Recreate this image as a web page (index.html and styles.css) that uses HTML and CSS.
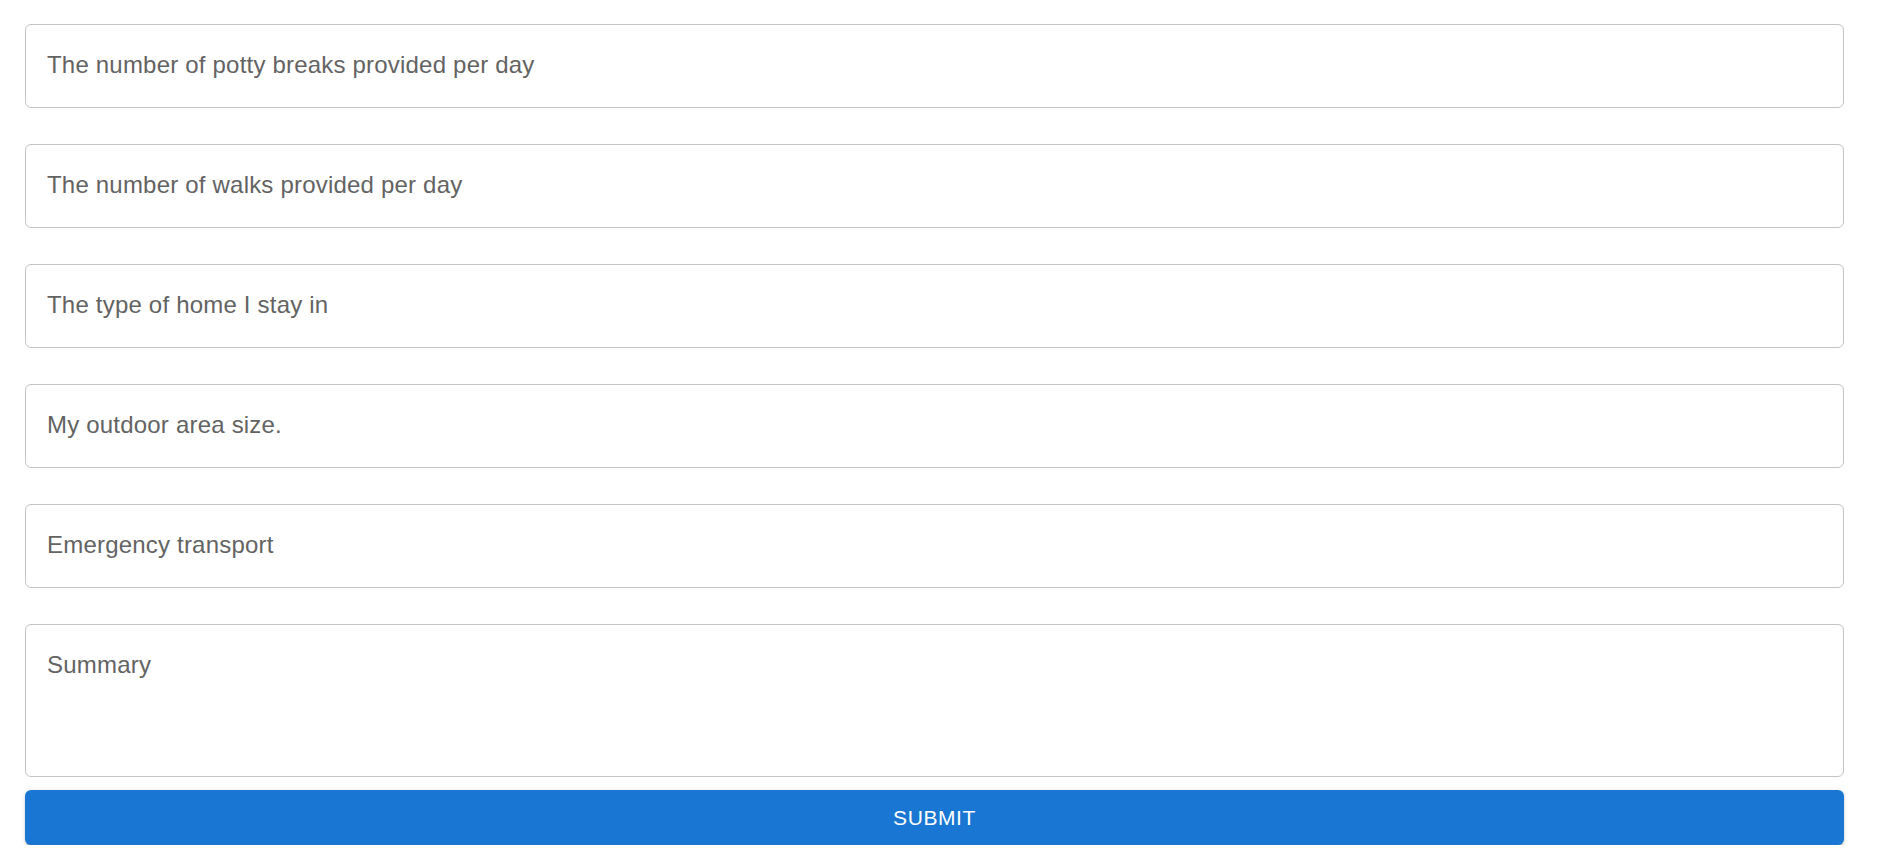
FILE: index.html
```html
<!DOCTYPE html>
<html lang="en">
<head>
    <meta charset="UTF-8">
    <meta name="viewport" content="width=device-width, initial-scale=1.0">
    <title>Care Details</title>
    <link rel="stylesheet" href="styles.css">
</head>
<body>
    <form class="care-form" onsubmit="return false;">
        <div class="field">
            <input type="text" placeholder="The number of potty breaks provided per day">
        </div>
        <div class="field">
            <input type="text" placeholder="The number of walks provided per day">
        </div>
        <div class="field">
            <input type="text" placeholder="The type of home I stay in">
        </div>
        <div class="field">
            <input type="text" placeholder="My outdoor area size.">
        </div>
        <div class="field">
            <input type="text" placeholder="Emergency transport">
        </div>
        <div class="field field-last">
            <textarea rows="3" placeholder="Summary"></textarea>
        </div>
        <button type="submit" class="submit-btn">Submit</button>
    </form>
</body>
</html>
```

FILE: styles.css
```css
body {
    font-family: 'Liberation Sans', Arial, sans-serif;
    margin: 0;
    padding: 0;
    background-color: #fff;
}
.care-form {
    display: flex;
    flex-direction: column;
    gap: 36px;
    padding: 24px 33px 0 25px;
}
.field {
    display: flex;
}
.field-last {
    margin-bottom: -23px;
}
.field input,
.field textarea {
    flex: 1;
    box-sizing: border-box;
    border: 1px solid #c4c4c4;
    border-radius: 6px;
    font-family: inherit;
    font-size: 24px;
    letter-spacing: 0.2px;
    color: #333;
    background: #fff;
    outline: none;
    margin: 0;
}
.field input {
    height: 84px;
    padding: 0 21px 2px;
}
.field textarea {
    height: 153px;
    padding: 23px 21px;
    line-height: 34.5px;
    resize: none;
}
.field input::placeholder,
.field textarea::placeholder {
    color: #636363;
    opacity: 1;
}
.submit-btn {
    height: 55px;
    border: none;
    border-radius: 6px;
    background-color: #1976d2;
    color: #fff;
    font-family: inherit;
    font-size: 21px;
    font-weight: 500;
    letter-spacing: 0.6px;
    text-transform: uppercase;
    cursor: pointer;
    box-shadow: 0 3px 1px -2px rgba(0, 0, 0, 0.2), 0 2px 2px 0 rgba(0, 0, 0, 0.14), 0 1px 5px 0 rgba(0, 0, 0, 0.12);
}
.submit-btn:hover {
    background-color: #1565c0;
}
```
